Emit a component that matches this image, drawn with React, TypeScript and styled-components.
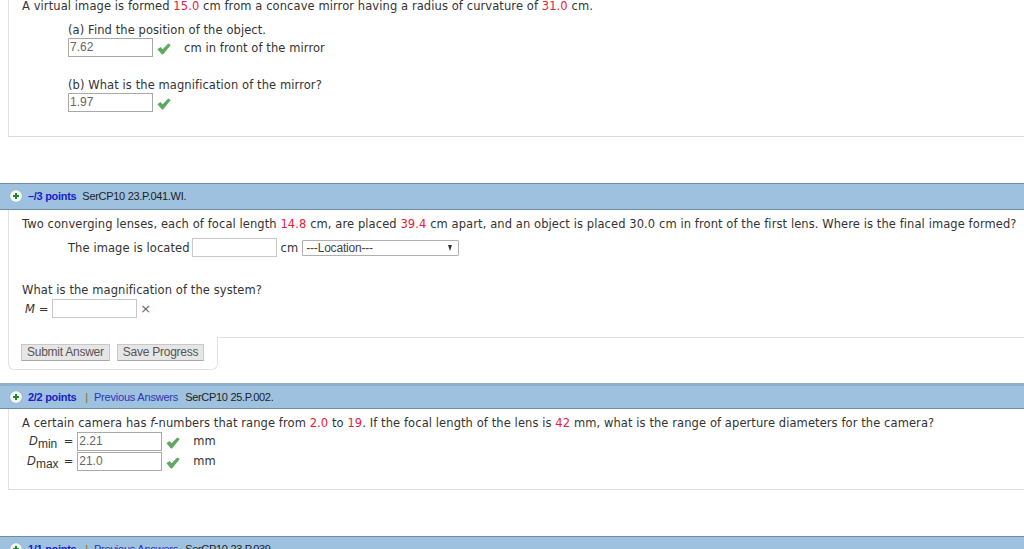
import React from "react";
import styled, { createGlobalStyle } from "styled-components";

const Global = createGlobalStyle`
  html, body { margin: 0; padding: 0; background: #fff; overflow: hidden; }
  body { width: 1024px; height: 549px; font-family: "DejaVu Sans", Verdana, sans-serif; font-size: 11.5px; color: #333; }
`;

const Page = styled.div`
  width: 1024px;
  height: 549px;
  overflow: hidden;
  display: flex;
  flex-direction: column;
`;

const Card = styled.div<{ $h: number }>`
  height: ${(p) => p.$h}px;
  box-sizing: border-box;
  margin-left: 8px;
  border-left: 1px solid #e2e2e2;
  border-bottom: 1px solid #dcdcdc;
  flex: none;
  display: flex;
  flex-direction: column;
`;

const Line = styled.div<{ $left: number; $top?: number; $h?: number }>`
  display: flex;
  align-items: center;
  height: ${(p) => p.$h ?? 14}px;
  margin-left: ${(p) => p.$left}px;
  margin-top: ${(p) => p.$top ?? 0}px;
  white-space: nowrap;
  letter-spacing: 0.086px;
  flex: none;
`;

const Red = styled.span`
  color: #e8203a;
  white-space: pre;
`;

const T = styled.span`
  white-space: pre;
`;

const Answer = styled.div<{ $w?: number; $done?: boolean; $ml?: number }>`
  box-sizing: border-box;
  width: ${(p) => p.$w ?? 85}px;
  height: 19px;
  border: 1px solid ${(p) => (p.$done ? "#a9a9a9" : "#c8c8c8")};
  margin-left: ${(p) => p.$ml ?? 0}px;
  padding-left: 1px;
  background: #fff;
  font-family: "Liberation Sans", Arial, sans-serif;
  font-size: 12px;
  line-height: 16px;
  color: #666;
  letter-spacing: 0;
  flex: none;
`;

const CheckSvg = styled.svg<{ $ml: number }>`
  margin-left: ${(p) => p.$ml}px;
  margin-top: 3px;
  flex: none;
`;

const Check = ({ ml = 0 }: { ml?: number }) => (
  <CheckSvg $ml={ml} viewBox="0 0 14 12" width="14" height="12">
    <path d="M0.4 6.2 L3.6 3.9 L5.7 6.3 L11.2 0.4 L13.8 2 L6 11.6 L5 11.6 Z" fill="#5fa85f" />
  </CheckSvg>
);

const Unit = styled.span<{ $ml: number }>`
  margin-left: ${(p) => p.$ml}px;
  white-space: pre;
`;

const Spacer = styled.div<{ $h: number }>`
  height: ${(p) => p.$h}px;
  flex: none;
`;

const Bar = styled.div<{ $double?: boolean }>`
  box-sizing: border-box;
  height: ${(p) => (p.$double ? 26 : 27)}px;
  flex: none;
  background: #9dc1df;
  border-top: ${(p) => (p.$double ? "3px solid #8db0cd" : "1px solid #6f8ba5")};
  border-bottom: 1px solid #6f8ba5;
  display: flex;
  align-items: center;
  padding: 0 0 ${(p) => (p.$double ? 0 : 2)}px 10px;
  font-family: "Liberation Sans", Arial, sans-serif;
  font-size: 11px;
  letter-spacing: -0.3px;
  color: #222;
  white-space: pre;
`;

const Plus = styled.span`
  width: 12px;
  height: 12px;
  border-radius: 50%;
  background: #f2f5f2;
  box-shadow: 0 0 1px 0 #6f8ba5;
  position: relative;
  margin-right: 6px;
  flex: none;
  &::before {
    content: "";
    position: absolute;
    left: 3px;
    top: 5px;
    width: 6px;
    height: 2px;
    background: #1f8a2c;
  }
  &::after {
    content: "";
    position: absolute;
    left: 5px;
    top: 3px;
    width: 2px;
    height: 6px;
    background: #1f8a2c;
  }
`;

const Points = styled.b`
  color: #1c1cc4;
  font-weight: 700;
  margin-right: 6px;
`;

const Pipe = styled.span`
  color: #8a6d1e;
  margin: 0 6px 0 3px;
`;

const PrevLink = styled.span`
  color: #2b35b5;
  margin-right: 7px;
  letter-spacing: -0.2px;
`;

const Caret = styled.span`
  margin-left: auto;
  margin-right: 6px;
  width: 0;
  height: 0;
  border-left: 2.5px solid transparent;
  border-right: 2.5px solid transparent;
  border-top: 6px solid #333;
`;

const Select = styled.div`
  box-sizing: border-box;
  width: 157px;
  height: 16px;
  margin-left: 4px;
  border: 1px solid #b0b0b0;
  border-radius: 1px;
  display: flex;
  align-items: center;
  padding-left: 3px;
  font-family: "Liberation Sans", Arial, sans-serif;
  font-size: 12px;
  color: #444;
  letter-spacing: -0.2px;
  flex: none;
`;

const Cross = styled.span`
  margin-left: 3px;
  color: #666;
  font-size: 13px;
`;

const Italic = styled.i`
  font-family: "DejaVu Sans", Verdana, sans-serif;
  white-space: pre;
`;

const Sub = styled.span`
  font-family: "Liberation Sans", Arial, sans-serif;
  font-size: 12px;
  letter-spacing: 0;
  position: relative;
  top: 3px;
`;

const ActionRow = styled.div`
  height: 32px;
  flex: none;
  display: flex;
  margin-left: 8px;
`;

const ActionBox = styled.div`
  box-sizing: border-box;
  width: 210px;
  height: 33px;
  border: 1px solid #e2e2e2;
  border-top: none;
  border-radius: 0 0 6px 6px;
  padding: 7px 0 0 12px;
  display: flex;
  gap: 7px;
  align-items: flex-start;
  flex: none;
  background: #fff;
`;

const ActionLine = styled.div`
  flex: 1;
  border-top: 1px solid #e2e2e2;
  height: 0;
`;

const Btn = styled.div`
  box-sizing: border-box;
  height: 17px;
  padding: 0 5px;
  background: #e6e6e6;
  border: 1px solid #c8c8c8;
  border-bottom-color: #aaa;
  font-family: "Liberation Sans", Arial, sans-serif;
  font-size: 12px;
  letter-spacing: -0.25px;
  line-height: 15px;
  color: #555;
  white-space: nowrap;
`;

const Gap = styled.div<{ $h: number }>`
  height: ${(p) => p.$h}px;
  flex: none;
`;

const Second = styled.div`
  height: 158px;
  flex: none;
  display: flex;
  flex-direction: column;
`;

const Upper = styled.div`
  height: 127px;
  flex: none;
  margin-left: 8px;
  border-left: 1px solid #e2e2e2;
  display: flex;
  flex-direction: column;
`;

const DLabel = styled.span<{ $w: number }>`
  width: ${(p) => p.$w}px;
  white-space: pre;
`;

export default function App() {
  return (
    <Page>
      <Global />
      <Card $h={137}>
        <Line $left={13} $top={-1}>
          <T>A virtual image is formed </T><Red>15.0</Red><T> cm from a concave mirror having a radius of curvature of </T><Red>31.0</Red><T> cm.</T>
        </Line>
        <Line $left={59} $top={10}><T>(a) Find the position of the object.</T></Line>
        <Line $left={59} $top={0} $h={21}>
          <Answer $done>7.62</Answer><Check ml={4} /><Unit $ml={13}>cm in front of the mirror</Unit>
        </Line>
        <Line $left={59} $top={20}><T>(b) What is the magnification of the mirror?</T></Line>
        <Line $left={59} $top={0} $h={21}>
          <Answer $done>1.97</Answer><Check ml={4} />
        </Line>
      </Card>
      <Gap $h={46} />
      <Bar>
        <Plus /><Points>–/3 points</Points><T>SerCP10 23.P.041.WI.</T>
      </Bar>
      <Second>
        <Upper>
          <Line $left={13} $top={7}>
            <T>Two converging lenses, each of focal length </T><Red>14.8</Red><T> cm, are placed </T><Red>39.4</Red><T> cm apart, and an object is placed 30.0 cm in front of the first lens. Where is the final image formed?</T>
          </Line>
          <Line $left={59} $top={7} $h={19}>
            <T>The image is located</T><Answer $ml={2} />
            <Unit $ml={4}>cm</Unit>
            <Select>---Location---<Caret /></Select>
          </Line>
          <Line $left={13} $top={26}><T>What is the magnification of the system?</T></Line>
          <Line $left={16} $top={2} $h={19}>
            <Italic>M</Italic><T> = </T><Answer /><Cross>×</Cross>
          </Line>
          <Spacer $h={18} />
        </Upper>
        <ActionRow>
          <ActionBox>
            <Btn>Submit Answer</Btn><Btn>Save Progress</Btn>
          </ActionBox>
          <ActionLine />
        </ActionRow>
      </Second>
      <Gap $h={15} />
      <Bar $double>
        <Plus /><Points>2/2 points</Points><Pipe>|</Pipe><PrevLink>Previous Answers</PrevLink><T>SerCP10 25.P.002.</T>
      </Bar>
      <Card $h={81}>
        <Line $left={13} $top={7}>
          <T>A certain camera has </T><Italic>f</Italic><T>-numbers that range from </T><Red>2.0</Red><T> to </T><Red>19</Red><T>. If the focal length of the lens is </T><Red>42</Red><T> mm, what is the range of aperture diameters for the camera?</T>
        </Line>
        <Line $left={20} $top={1} $h={20}>
          <DLabel $w={31}><Italic>D</Italic><Sub>min</Sub></DLabel><T> = </T><Answer $done>2.21</Answer><Check ml={4} /><Unit $ml={13}>mm</Unit>
        </Line>
        <Line $left={18} $top={0} $h={20}>
          <DLabel $w={33}><Italic>D</Italic><Sub>max</Sub></DLabel><T> = </T><Answer $done>21.0</Answer><Check ml={4} /><Unit $ml={13}>mm</Unit>
        </Line>
      </Card>
      <Gap $h={46} />
      <Bar>
        <Plus /><Points>1/1 points</Points><Pipe>|</Pipe><PrevLink>Previous Answers</PrevLink><T>SerCP10 23.P.039.</T>
      </Bar>
    </Page>
  );
}
